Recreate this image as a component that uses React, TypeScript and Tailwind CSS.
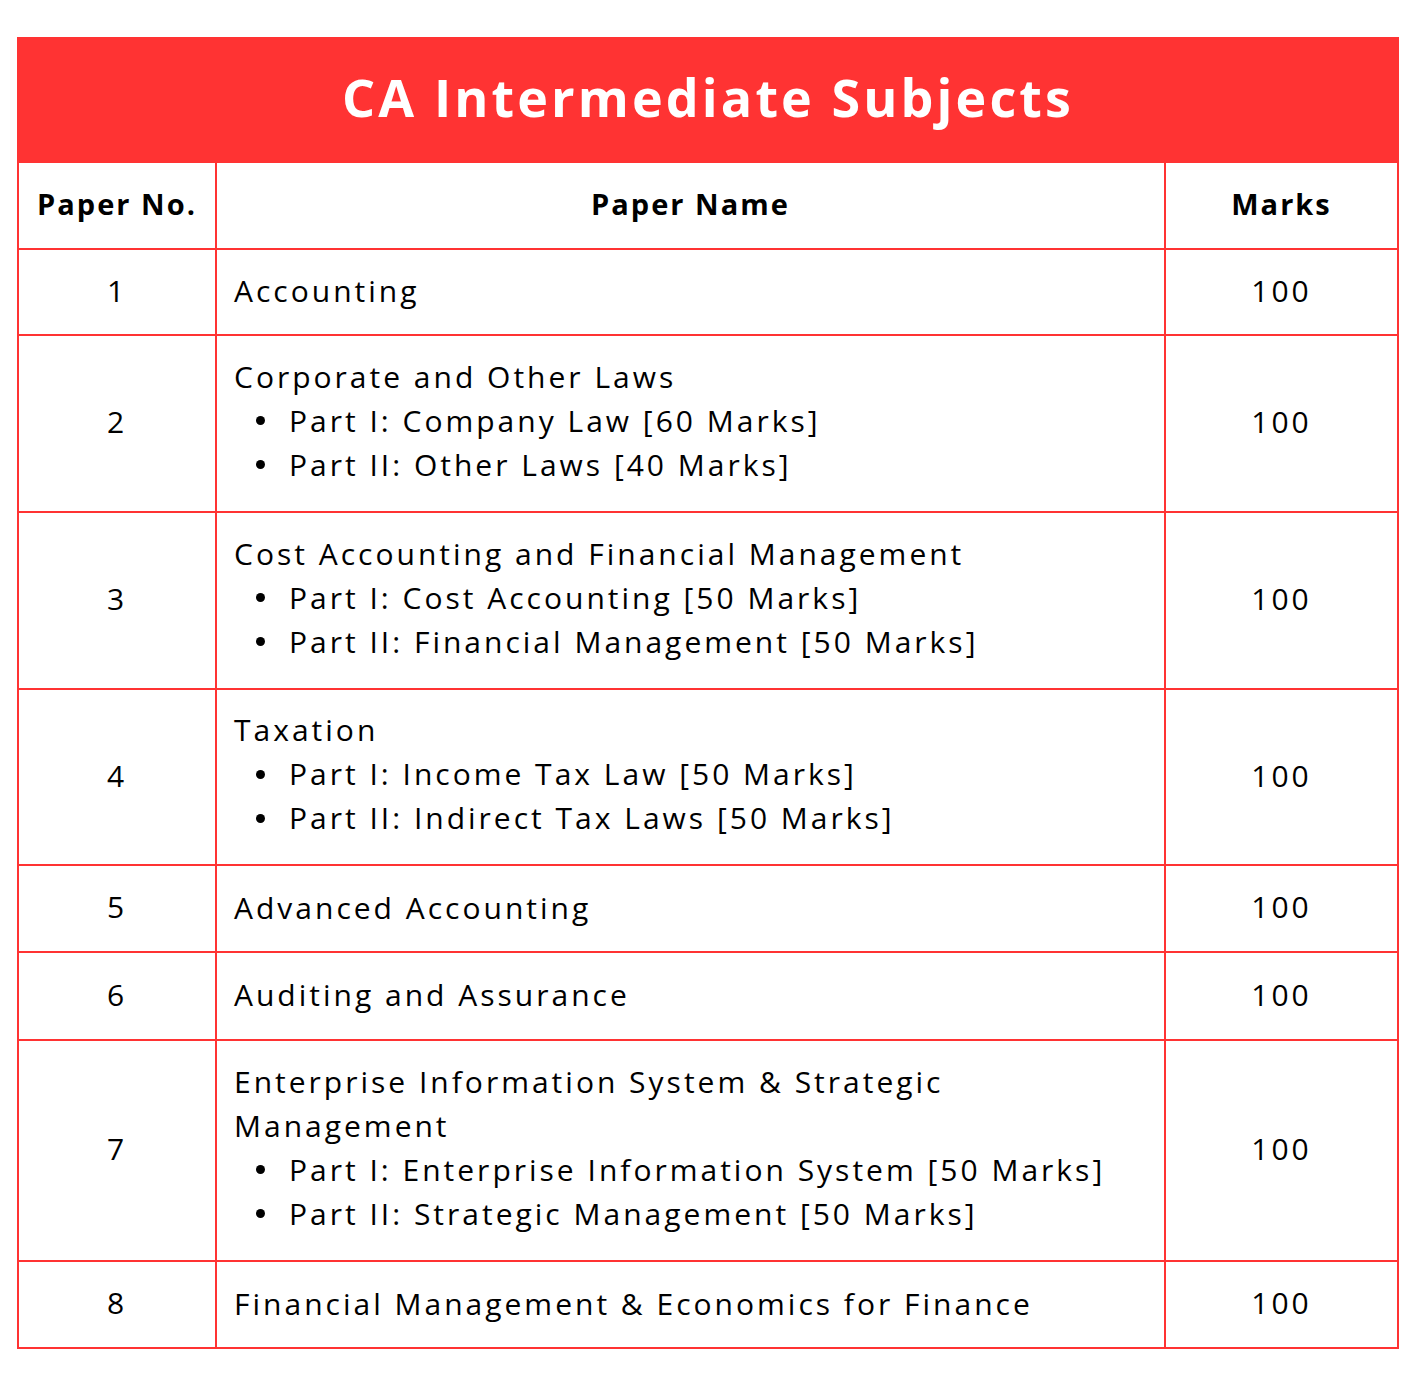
import React from "react";

type Row = { no: string; name: string; parts?: string[]; h: string };

const rows: Row[] = [
  { no: "1", name: "Accounting", h: "h-[86px]" },
  {
    no: "2",
    name: "Corporate and Other Laws",
    parts: ["Part I: Company Law [60 Marks]", "Part II: Other Laws [40 Marks]"],
    h: "h-[177px]",
  },
  {
    no: "3",
    name: "Cost Accounting and Financial Management",
    parts: ["Part I: Cost Accounting [50 Marks]", "Part II: Financial Management [50 Marks]"],
    h: "h-[177px]",
  },
  {
    no: "4",
    name: "Taxation",
    parts: ["Part I: Income Tax Law [50 Marks]", "Part II: Indirect Tax Laws [50 Marks]"],
    h: "h-[176px]",
  },
  { no: "5", name: "Advanced Accounting", h: "h-[87px]" },
  { no: "6", name: "Auditing and Assurance", h: "h-[88px]" },
  {
    no: "7",
    name: "Enterprise Information System & Strategic Management",
    parts: ["Part I: Enterprise Information System [50 Marks]", "Part II: Strategic Management [50 Marks]"],
    h: "h-[221px]",
  },
  { no: "8", name: "Financial Management & Economics for Finance", h: "h-[87px]" },
];

const cell = "border-2 border-[#ff3333]";

export default function App() {
  return (
    <div className="min-h-[1386px] w-[1414px] bg-white pt-[37px] pl-[17px] font-['Open_Sans',sans-serif] text-black">
      <table className="w-[1380px] table-fixed border-collapse">
        <colgroup>
          <col className="w-[198px]" />
          <col className="w-[949px]" />
          <col className="w-[233px]" />
        </colgroup>
        <thead>
          <tr className="h-[124px]">
            <th
              colSpan={3}
              className={`${cell} bg-[#ff3333] pb-[6px] text-center text-[52px] font-bold tracking-[0.06em] text-white`}
            >
              CA Intermediate Subjects
            </th>
          </tr>
          <tr className="h-[87px]">
            <th className={`${cell} pb-[4px] text-center text-[29px] font-bold tracking-[0.07em]`}>Paper No.</th>
            <th className={`${cell} pb-[4px] text-center text-[29px] font-bold tracking-[0.07em]`}>Paper Name</th>
            <th className={`${cell} pb-[4px] text-center text-[29px] font-bold tracking-[0.07em]`}>Marks</th>
          </tr>
        </thead>
        <tbody className="text-[30px] tracking-[0.1em]">
          {rows.map((r) => (
            <tr key={r.no} className={r.h}>
              <td className={`${cell} pb-[4px] text-center`}>{r.no}</td>
              <td
                className={`${cell} pr-4 pl-[17px] leading-[44px] ${
                  r.parts ? "pt-[17px] pb-[23px]" : "pt-[19px] pb-[21px]"
                }`}
              >
                <div>{r.name}</div>
                {r.parts && (
                  <ul>
                    {r.parts.map((p) => (
                      <li key={p} className="flex items-center">
                        <span className="ml-[22px] mr-[24px] size-[9px] shrink-0 rounded-full bg-black" />
                        <span>{p}</span>
                      </li>
                    ))}
                  </ul>
                )}
              </td>
              <td className={`${cell} pb-[4px] text-center`}>100</td>
            </tr>
          ))}
        </tbody>
      </table>
    </div>
  );
}
